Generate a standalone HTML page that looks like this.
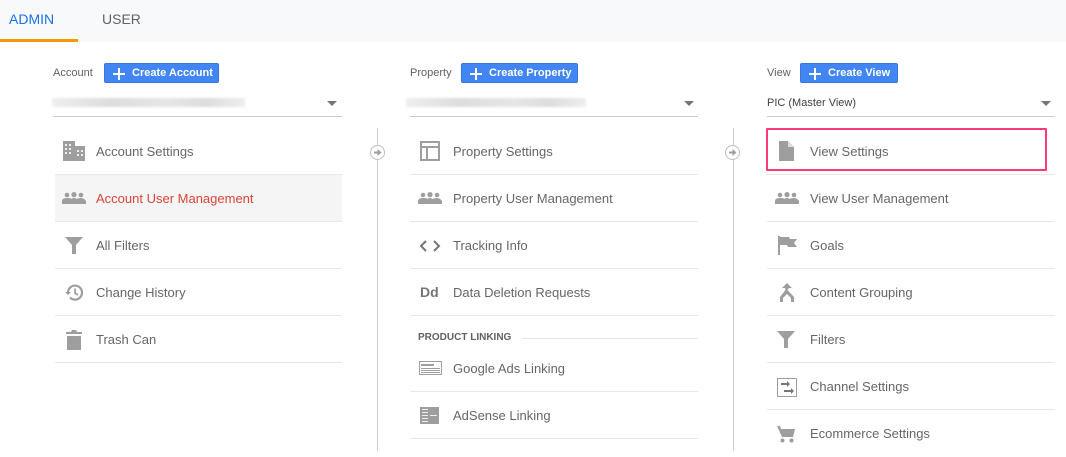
<!DOCTYPE html>
<html><head><meta charset="utf-8"><style>
*{margin:0;padding:0;box-sizing:border-box}
body{width:1066px;height:451px;overflow:hidden;background:#fff;font-family:"Liberation Sans",Arial,sans-serif;position:relative;color:#616161}
.hdr{position:absolute;left:0;top:0;width:1066px;height:42px;background:#f8f9fa}
.tab{position:absolute;top:11px;font-size:14px}
.ul{position:absolute;left:0;top:39px;width:78px;height:3px;background:#f29900}
.a{position:absolute}
.lbl{font-size:11px;color:#616161}
.btn{background:#4285f4;color:#fff;font-size:11px;font-weight:bold;height:20px;border-radius:2px;border:1px solid #3a75d8;line-height:18px;padding-left:27px}
.btn:before{content:"";position:absolute;left:8px;top:9px;width:12px;height:1.6px;background:#fff}
.btn:after{content:"";position:absolute;left:13.2px;top:3.5px;width:1.6px;height:12px;background:#fff}
.dd{height:1px;background:#ccc}
.blur{height:9px;background:linear-gradient(90deg,#eee,#ddd 30%,#e6e6e6 60%,#ddd 80%,#eee);filter:blur(1px)}
.tri{width:0;height:0;border-left:5px solid transparent;border-right:5px solid transparent;border-top:5px solid #757575}
.row{position:absolute;height:47px;font-size:13px;color:#666;line-height:47px}
.row.d{border-bottom:1px solid #e8e8e8}
.row svg{position:absolute;top:13px}
.vl{position:absolute;width:1px;background:#ccc}
.circ{position:absolute;width:15px;height:15px;border:1px solid #bdbdbd;border-radius:50%;background:#fff}
.circ svg{position:absolute;left:2px;top:2px}
</style></head><body>
<div class="hdr"></div>
<div class="tab" style="left:9px;color:#1a73e8">ADMIN</div>
<div class="tab" style="left:102px;color:#5f6368">USER</div>
<div class="ul"></div>

<div class="a lbl" style="left:53px;top:67px">Account</div>
<div class="a btn" style="left:104px;top:63px;width:115px">Create Account</div>
<div class="a blur" style="left:52px;top:98px;width:193px"></div>
<div class="a tri" style="left:327px;top:101px"></div>
<div class="a dd" style="left:53px;top:116px;width:289px"></div>

<div class="row d" style="left:55px;top:128px;width:287px">
<svg style="left:8px" width="22" height="20" viewBox="0 0 22 20"><path fill="#9e9e9e" d="M0 0h12v5h10v15H0z"/><g fill="#eee"><rect x="2" y="3" width="2" height="2"/><rect x="6" y="3" width="2" height="2"/><rect x="2" y="7" width="2" height="2"/><rect x="6" y="7" width="2" height="2"/><rect x="2" y="11" width="2" height="2"/><rect x="6" y="11" width="2" height="2"/><rect x="14" y="9" width="2" height="2"/><rect x="18" y="9" width="2" height="2"/><rect x="14" y="13" width="2" height="2"/><rect x="18" y="13" width="2" height="2"/></g></svg>
<span style="position:absolute;left:41px">Account Settings</span></div>
<div class="row d" style="left:55px;top:175px;width:287px;background:#f5f5f5">
<svg style="left:7px;top:17px" width="24" height="12" viewBox="0 0 24 12"><g fill="#9e9e9e"><circle cx="5" cy="3" r="2.3"/><circle cx="12" cy="2.6" r="2.6"/><circle cx="19" cy="3" r="2.3"/><path d="M0 12v-3q0-3 5-3t4 1q3-2 6 0q1-1 4-1t5 3v3z"/></g></svg>
<span style="position:absolute;left:41px;color:#db4437">Account User Management</span></div>
<div class="row d" style="left:55px;top:222px;width:287px">
<svg style="left:10px;top:15px" width="18" height="17" viewBox="0 0 18 17"><path fill="#9e9e9e" d="M0 0h18l-7 8v9h-4v-9z"/></svg>
<span style="position:absolute;left:41px">All Filters</span></div>
<div class="row d" style="left:55px;top:269px;width:287px">
<svg style="left:10px;top:15px" width="18" height="17" viewBox="0 0 18 17"><path fill="none" stroke="#9e9e9e" stroke-width="2.2" d="M3 8.5a7 7 0 1 1 2 5"/><path fill="#9e9e9e" d="M0 8h6l-3 3z"/><path fill="none" stroke="#9e9e9e" stroke-width="1.8" d="M10 4.5v4.5l3 2"/></svg>
<span style="position:absolute;left:41px">Change History</span></div>
<div class="row d" style="left:55px;top:316px;width:287px">
<svg style="left:11px;top:14px" width="16" height="20" viewBox="0 0 16 20"><path fill="#9e9e9e" d="M0 2h5l1-2h4l1 2h5v2H0zM1 6h14v14H1z"/></svg>
<span style="position:absolute;left:41px">Trash Can</span></div>

<div class="vl" style="left:377px;top:128px;height:323px"></div>
<div class="circ" style="left:370px;top:145px"><svg width="9" height="9" viewBox="0 0 9 9"><path fill="#9e9e9e" d="M1 3.5h3.5V1l4 3.5-4 3.5V5.5H1z"/></svg></div>
<div class="a lbl" style="left:410px;top:67px">Property</div>
<div class="a btn" style="left:461px;top:63px;width:117px">Create Property</div>
<div class="a blur" style="left:406px;top:98px;width:180px"></div>
<div class="a tri" style="left:684px;top:101px"></div>
<div class="a dd" style="left:410px;top:116px;width:288px"></div>

<div class="row d" style="left:410px;top:128px;width:288px">
<svg style="left:10px;top:13px" width="20" height="20" viewBox="0 0 20 20"><path fill="none" stroke="#9e9e9e" stroke-width="2" d="M1 1h18v18H1zM1 6h18M7 6v13"/></svg>
<span style="position:absolute;left:43px">Property Settings</span></div>
<div class="row d" style="left:410px;top:175px;width:288px">
<svg style="left:8px;top:17px" width="24" height="12" viewBox="0 0 24 12"><g fill="#9e9e9e"><circle cx="5" cy="3" r="2.3"/><circle cx="12" cy="2.6" r="2.6"/><circle cx="19" cy="3" r="2.3"/><path d="M0 12v-3q0-3 5-3t4 1q3-2 6 0q1-1 4-1t5 3v3z"/></g></svg>
<span style="position:absolute;left:43px">Property User Management</span></div>
<div class="row d" style="left:410px;top:222px;width:288px">
<svg style="left:9px;top:18px" width="22" height="12" viewBox="0 0 22 12"><path fill="none" stroke="#757575" stroke-width="2" d="M7 1L2 6l5 5M15 1l5 5-5 5"/></svg>
<span style="position:absolute;left:43px">Tracking Info</span></div>
<div class="row d" style="left:410px;top:269px;width:288px">
<span style="position:absolute;left:10px;font-weight:bold;font-size:14px;color:#757575">Dd</span>
<span style="position:absolute;left:43px">Data Deletion Requests</span></div>
<div class="a" style="left:418px;top:332px;font-size:10px;font-weight:bold;color:#616161">PRODUCT LINKING</div>
<div class="a" style="left:522px;top:338px;width:176px;height:1px;background:#e8e8e8"></div>
<div class="row d" style="left:410px;top:345px;width:288px">
<svg style="left:9px;top:16px" width="23" height="14" viewBox="0 0 23 14"><path fill="none" stroke="#9e9e9e" stroke-width="1" d="M.5.5h22v13H.5z"/><g fill="#9e9e9e"><rect x="2" y="3" width="13" height="2"/><rect x="2" y="7" width="19" height="1"/><rect x="2" y="9" width="19" height="1"/><rect x="2" y="11" width="19" height="1"/></g></svg>
<span style="position:absolute;left:43px">Google Ads Linking</span></div>
<div class="row d" style="left:410px;top:392px;width:288px">
<svg style="left:10px;top:15px" width="19" height="17" viewBox="0 0 19 17"><path fill="#9e9e9e" d="M0 0h19v17H0z"/><g fill="#eee"><rect x="2" y="2" width="6" height="1"/><rect x="2" y="5" width="6" height="1"/><rect x="2" y="8" width="6" height="1"/><rect x="2" y="11" width="6" height="1"/><rect x="2" y="14" width="6" height="1"/><rect x="10" y="8" width="7" height="1"/></g></svg>
<span style="position:absolute;left:43px">AdSense Linking</span></div>

<div class="vl" style="left:733px;top:128px;height:323px"></div>
<div class="circ" style="left:725px;top:145px"><svg width="9" height="9" viewBox="0 0 9 9"><path fill="#9e9e9e" d="M1 3.5h3.5V1l4 3.5-4 3.5V5.5H1z"/></svg></div>
<div class="a lbl" style="left:767px;top:67px">View</div>
<div class="a btn" style="left:800px;top:63px;width:98px">Create View</div>
<div class="a" style="left:767px;top:97px;font-size:11px;color:#424242">PIC (Master View)</div>
<div class="a tri" style="left:1041px;top:101px"></div>
<div class="a dd" style="left:767px;top:116px;width:288px"></div>

<div class="row d" style="left:767px;top:128px;width:288px">
<svg style="left:12px;top:13px" width="15" height="20" viewBox="0 0 15 20"><path fill="#9e9e9e" d="M0 0h9l6 6v14H0z"/><path fill="#ddd" d="M9 0v6h6z"/></svg>
<span style="position:absolute;left:43px">View Settings</span></div>
<div class="a" style="left:766px;top:128px;width:281px;height:43px;border:2.5px solid #ff3b74;border-radius:1px"></div>
<div class="row d" style="left:767px;top:175px;width:288px">
<svg style="left:8px;top:17px" width="24" height="12" viewBox="0 0 24 12"><g fill="#9e9e9e"><circle cx="5" cy="3" r="2.3"/><circle cx="12" cy="2.6" r="2.6"/><circle cx="19" cy="3" r="2.3"/><path d="M0 12v-3q0-3 5-3t4 1q3-2 6 0q1-1 4-1t5 3v3z"/></g></svg>
<span style="position:absolute;left:43px">View User Management</span></div>
<div class="row d" style="left:767px;top:222px;width:288px">
<svg style="left:11px;top:14px" width="19" height="19" viewBox="0 0 19 19"><path fill="#9e9e9e" d="M0 0h2v19H0zM2 1h9l1 2h7l-3 4 3 4h-9l-1-2H2z"/></svg>
<span style="position:absolute;left:43px">Goals</span></div>
<div class="row d" style="left:767px;top:269px;width:288px">
<svg style="left:12px;top:14px" width="17" height="19" viewBox="0 0 17 19"><path fill="#9e9e9e" d="M8 0l5 5H10l-1.5 2L15 14v5h-3v-4l-4-4-4 4v4H1v-5l5.5-7L6 5H3z"/></svg>
<span style="position:absolute;left:43px">Content Grouping</span></div>
<div class="row d" style="left:767px;top:316px;width:288px">
<svg style="left:10px;top:15px" width="18" height="17" viewBox="0 0 18 17"><path fill="#9e9e9e" d="M0 0h18l-7 8v9h-4v-9z"/></svg>
<span style="position:absolute;left:43px">Filters</span></div>
<div class="row d" style="left:767px;top:363px;width:288px">
<svg style="left:10px;top:15px" width="21" height="19" viewBox="0 0 21 19"><path fill="none" stroke="#9e9e9e" stroke-width="1" d="M.5.5h19v18H.5z"/><path fill="#757575" d="M4 5h6v-2l3 3-3 3v-2H4zM7 12h7v-2l3 3-3 3v-2H7z"/></svg>
<span style="position:absolute;left:43px">Channel Settings</span></div>
<div class="row" style="left:767px;top:410px;width:288px">
<svg style="left:10px;top:16px" width="18" height="17" viewBox="0 0 18 17"><path fill="#9e9e9e" d="M0 0h3l1 3h14l-2 8H5z"/><circle cx="5.5" cy="14.5" r="2" fill="#9e9e9e"/><circle cx="14.5" cy="14.5" r="2" fill="#9e9e9e"/></svg>
<span style="position:absolute;left:43px">Ecommerce Settings</span></div>
</body></html>
